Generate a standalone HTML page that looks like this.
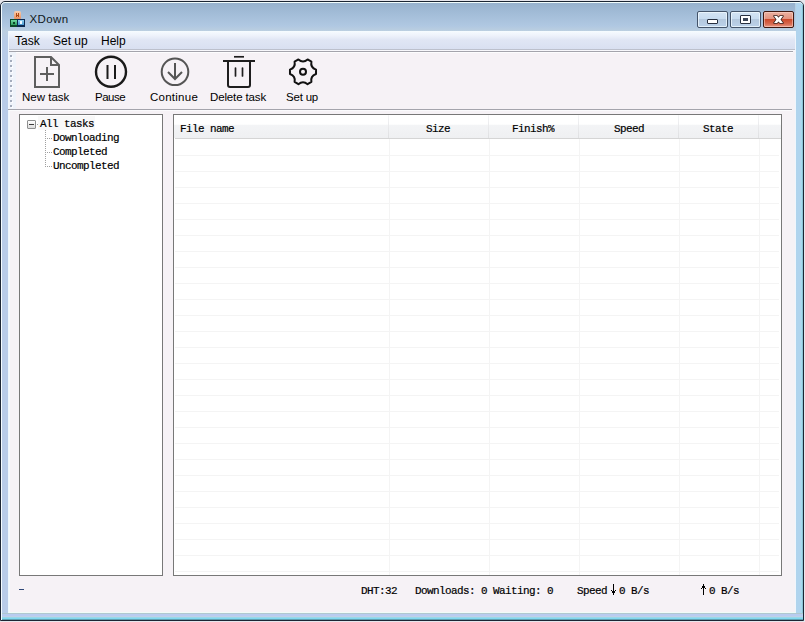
<!DOCTYPE html>
<html><head><meta charset="utf-8">
<style>
*{margin:0;padding:0;box-sizing:border-box}
html,body{width:805px;height:622px;overflow:hidden;background:#e6e6ec;position:relative}
div,span{position:absolute}
.sans{font-family:"Liberation Sans",sans-serif}
.mono{font-family:"Liberation Mono",monospace;-webkit-text-stroke:0.2px #000;font-size:11.5px;letter-spacing:-0.6px;white-space:pre;transform:scaleX(.952);transform-origin:0 0;color:#000;line-height:14px}
#frame{left:0;top:1px;width:804px;height:620px;border:1px solid #1c2634;border-radius:5px 5px 0 0;
  background:linear-gradient(to bottom,#96b1cd 0px,#a3bdd8 12px,#b0c8e2 24px,#bccfe0 29px,#b8cce8 40px,#b8cce8 100%);overflow:hidden}
#hl{left:0;top:0;width:802px;height:618px;border-left:1px solid #f4fcff;border-top:1px solid #f0fcfc;border-radius:4px 4px 0 0}
#client{left:8px;top:31px;width:788px;height:582px;background:#f6f2f6;border-left:1px solid #eef6fc;box-shadow:inset 1px 0 0 #f4f8fc;border-right:1px solid #f0f6fc;border-bottom:1px solid #f0fcf8;overflow:hidden}
#bottomcyan{left:1px;top:611px;width:802px;height:7px;background:linear-gradient(to bottom,#b0c8d0 0,#b0c8d0 1px,#b8ccf0 1px,#b8ccf0 3px,#c0d0e8 3px,#c0d0e8 4px,#98d8e8 4px,#98d8e8 5px,#80d8f0 5px,#80d8f0 6px,#60a0b0 6px)}
#rightcyan{left:794px;top:0;width:8px;height:618px;background:linear-gradient(to right,#b8ccdc,#b0d4ee 20%,#b0d4ee 70%,#a8dcf0 80%,#80b8c8)}
</style></head><body>
<div id="frame">
  <div id="rightcyan"></div>
  <div id="bottomcyan"></div>
  <div id="hl"></div>
</div>
<!-- app icon -->
<div style="left:14px;top:11px;width:7px;height:8px;background:linear-gradient(#f8d0b0,#e89060);border-radius:2px 2px 1px 1px"></div>
<div style="left:16px;top:13px;width:1px;height:4px;background:#b04810"></div><div style="left:18px;top:13px;width:1px;height:4px;background:#b04810"></div><div style="left:16px;top:15px;width:3px;height:1px;background:#b04810"></div>
<div style="left:10px;top:19px;width:8px;height:8px;background:linear-gradient(#70d8a0,#30a060);border:1px solid #0c4828;border-bottom-width:2px"></div>
<div style="left:13px;top:22px;width:2px;height:2px;background:#0c4828"></div>
<div style="left:17px;top:19px;width:8px;height:8px;background:linear-gradient(#90d0f0,#4898d0);border:1px solid #0c2850;border-bottom-width:2px"></div>
<div style="left:20px;top:21px;width:2px;height:3px;background:#f0f8ff"></div>
<div class="sans" style="left:29.6px;top:12.4px;font-size:11.5px;letter-spacing:0.35px;color:#101820;line-height:15px">XDown</div>

<!-- window buttons -->
<div style="left:697px;top:11px;width:31px;height:17px;border:1px solid #44546a;border-radius:2px;box-shadow:inset 0 0 0 1px rgba(240,250,255,.75);background:linear-gradient(#d4e4f4 0,#c8dcf0 45%,#b4c8de 50%,#bcd2ea 100%)"></div>
<div style="left:707px;top:19px;width:11px;height:5px;border:1px solid #283040;border-radius:1px;background:#fff"></div>
<div style="left:730px;top:11px;width:31px;height:17px;border:1px solid #44546a;border-radius:2px;box-shadow:inset 0 0 0 1px rgba(240,250,255,.75);background:linear-gradient(#d4e4f4 0,#c8dcf0 45%,#b4c8de 50%,#bcd2ea 100%)"></div>
<div style="left:740px;top:15px;width:11px;height:9px;border:1px solid #283040;border-radius:1px;background:#fff"></div>
<div style="left:743px;top:18px;width:5px;height:3px;background:#3c4658"></div>
<div style="left:763px;top:11px;width:31px;height:17px;border:1px solid #401810;border-radius:2px;box-shadow:inset 0 0 0 1px rgba(255,220,210,.5);background:linear-gradient(#eab0a0 0,#e49480 45%,#cc4a2c 50%,#d86a50 80%,#e89a88 100%)"></div>
<svg style="position:absolute;left:770px;top:12px" width="17" height="14" viewBox="0 0 17 14">
  <path d="M4.0 4.0 L7.0 4.0 L8.5 5.8 L10.0 4.0 L13.0 4.0 L10.5 7.6 L13.0 11.0 L10.0 11.0 L8.5 9.4 L7.0 11.0 L4.0 11.0 L6.5 7.6 Z" fill="#fff" stroke="#3a2420" stroke-width="1.6" stroke-linejoin="round" paint-order="stroke"/>
</svg>

<div id="client">
  <!-- menubar -->
  <div style="left:0;top:0;width:788px;height:18px;background:linear-gradient(#f6fcff 0,#eef2fb 25%,#e0e6f4 50%,#d9e0f1 100%)"></div>
  <div style="left:0;top:18px;width:788px;height:1px;background:#bcc0cc"></div>
  <div style="left:0;top:19px;width:788px;height:1px;background:#f8f8fc"></div>
  <div style="left:0;top:20px;width:784px;height:1px;background:#a4a4ac"></div>
  <div style="left:0;top:21px;width:784px;height:1px;background:#fdfdfe"></div>
  <div class="sans" style="left:6px;top:3px;font-size:12px;line-height:15px;color:#000">Task</div>
  <div class="sans" style="left:44px;top:3px;font-size:12px;line-height:15px;color:#000">Set up</div>
  <div class="sans" style="left:92px;top:3px;font-size:12px;line-height:15px;color:#000">Help</div>

  <!-- toolbar bottom line -->
  <div style="left:-1px;top:78px;width:784px;height:1px;background:#a4a4ac"></div>
  <div style="left:-1px;top:79px;width:784px;height:1px;background:#fbfbfd"></div>
  <div style="left:0;top:21px;width:7px;height:57px;background:#eff3fa"></div>
</div>

<!-- gripper -->



<div style="left:10px;top:55px;width:2px;height:2px;background:#a4acbc;box-shadow:1px 1px 0 #fcfcff"></div><div style="left:10px;top:60px;width:2px;height:2px;background:#a4acbc;box-shadow:1px 1px 0 #fcfcff"></div><div style="left:10px;top:65px;width:2px;height:2px;background:#a4acbc;box-shadow:1px 1px 0 #fcfcff"></div><div style="left:10px;top:70px;width:2px;height:2px;background:#a4acbc;box-shadow:1px 1px 0 #fcfcff"></div><div style="left:10px;top:75px;width:2px;height:2px;background:#a4acbc;box-shadow:1px 1px 0 #fcfcff"></div><div style="left:10px;top:80px;width:2px;height:2px;background:#a4acbc;box-shadow:1px 1px 0 #fcfcff"></div><div style="left:10px;top:85px;width:2px;height:2px;background:#a4acbc;box-shadow:1px 1px 0 #fcfcff"></div><div style="left:10px;top:90px;width:2px;height:2px;background:#a4acbc;box-shadow:1px 1px 0 #fcfcff"></div><div style="left:10px;top:95px;width:2px;height:2px;background:#a4acbc;box-shadow:1px 1px 0 #fcfcff"></div><div style="left:10px;top:100px;width:2px;height:2px;background:#a4acbc;box-shadow:1px 1px 0 #fcfcff"></div><div style="left:10px;top:105px;width:2px;height:2px;background:#a4acbc;box-shadow:1px 1px 0 #fcfcff"></div>
<div style="left:8px;top:109px;width:1px;height:1px;background:#a4a4ac"></div>
<!-- toolbar icons -->
<svg style="position:absolute;left:0;top:0" width="805" height="110">
  <g fill="none" stroke="#5e5e5e" stroke-width="2">
    <path d="M35 57 H51 L59 65 V87 H35 Z"/>
    <path d="M51 57 V65 H59"/>
    <path d="M40 74 H54 M47 67 V81"/>
  </g>
  <circle cx="111" cy="71.8" r="15" fill="none" stroke="#1a1a1a" stroke-width="2.4"/>
  <path d="M107.5 65 V79 M115 65 V79" stroke="#1a1a1a" stroke-width="2"/>
  <circle cx="175" cy="71.8" r="13.3" fill="none" stroke="#555" stroke-width="2"/>
  <path d="M175 63 V79 M168 72 L175 79 L182 72" fill="none" stroke="#555" stroke-width="2"/>
  <g stroke="#1e1e1e" stroke-width="2" fill="none">
    <path d="M234 56.8 H244" stroke-width="1.7"/>
    <path d="M223 61 H255"/>
    <path d="M228 61 V85 Q228 87 230 87 H248 Q250 87 250 85 V61"/>
    <path d="M235.5 68 V76 M242.5 68 V76" stroke-width="1.7" stroke-linecap="round"/>
  </g>
  <path d="M316.02 69.60 L316.02 74.00 Q310.27 76.00 311.41 81.97 L307.60 84.17 Q303.00 80.20 298.40 84.17 L294.59 81.97 Q295.73 76.00 289.98 74.00 L289.98 69.60 Q295.73 67.60 294.59 61.63 L298.40 59.43 Q303.00 63.40 307.60 59.43 L311.41 61.63 Q310.27 67.60 316.02 69.60 Z" fill="none" stroke="#111" stroke-width="2" stroke-linejoin="round"/>
  <circle cx="303" cy="71.8" r="3" fill="none" stroke="#111" stroke-width="2"/>
</svg>

<div class="sans" style="left:22px;top:90px;font-size:11.5px;line-height:14px;color:#000">New task</div>
<div class="sans" style="left:95px;top:90px;font-size:11.5px;letter-spacing:-0.5px;line-height:14px;color:#000">Pause</div>
<div class="sans" style="left:150px;top:90px;font-size:11.5px;letter-spacing:0.25px;line-height:14px;color:#000">Continue</div>
<div class="sans" style="left:210px;top:90px;font-size:11.5px;letter-spacing:-0.14px;line-height:14px;color:#000">Delete task</div>
<div class="sans" style="left:286px;top:90px;font-size:11.5px;letter-spacing:-0.2px;line-height:14px;color:#000">Set up</div>

<!-- tree -->
<div style="left:19px;top:114px;width:144px;height:462px;border:1px solid #787878;background:#fff"></div>
<div style="left:38px;top:116px;width:57px;height:14px;background:#f8f8f8"></div>
<div class="mono" style="left:40px;top:117px">All tasks</div>
<div class="mono" style="left:53px;top:131px">Downloading</div>
<div class="mono" style="left:53px;top:145px">Completed</div>
<div class="mono" style="left:53px;top:159px">Uncompleted</div>

<!-- list -->
<div style="left:173px;top:114px;width:609px;height:462px;border:1px solid #787878;background:#fff"></div>
<div style="left:174px;top:115px;width:607px;height:23px;background:linear-gradient(#ffffff 0,#ffffff 40%,#f3f4f6 45%,#eff0f2 100%)"></div>
<div style="left:175px;top:138px;width:606px;height:1px;background:#d5d5d5"></div>

<!-- tree decorations -->
<div style="left:27px;top:120px;width:9px;height:9px;border:1px solid #8e8f8f;border-radius:1px;background:linear-gradient(#ffffff,#dcdcdc)"></div>
<div style="left:29px;top:124px;width:5px;height:1px;background:#3c3c3c"></div>
<div style="left:37px;top:124px;width:1px;height:1px;background:#a0a0a0"></div>
<div style="left:45px;top:130px;width:1px;height:37px;background:repeating-linear-gradient(to bottom,#a0a0a0 0,#a0a0a0 1px,transparent 1px,transparent 2px)"></div>
<div style="left:47px;top:138px;width:6px;height:1px;background:repeating-linear-gradient(to right,#a0a0a0 0,#a0a0a0 1px,transparent 1px,transparent 2px)"></div>
<div style="left:47px;top:152px;width:6px;height:1px;background:repeating-linear-gradient(to right,#a0a0a0 0,#a0a0a0 1px,transparent 1px,transparent 2px)"></div>
<div style="left:47px;top:166px;width:6px;height:1px;background:repeating-linear-gradient(to right,#a0a0a0 0,#a0a0a0 1px,transparent 1px,transparent 2px)"></div>
<!-- list grid -->
<div style="left:175px;top:140px;width:604px;height:435px;background:linear-gradient(to bottom,transparent 15px,#f4f4f4 15px);background-size:604px 16px"></div>
<div style="left:389px;top:139px;width:1px;height:436px;background:#f4f4f4"></div>
<div style="left:489px;top:139px;width:1px;height:436px;background:#f4f4f4"></div>
<div style="left:579px;top:139px;width:1px;height:436px;background:#f4f4f4"></div>
<div style="left:679px;top:139px;width:1px;height:436px;background:#f4f4f4"></div>
<div style="left:759px;top:139px;width:1px;height:436px;background:#f4f4f4"></div>
<!-- header separators -->
<div style="left:388px;top:115px;width:1px;height:23px;background:linear-gradient(#f4f4f6,#dfe0e2)"></div>
<div style="left:488px;top:115px;width:1px;height:23px;background:linear-gradient(#f4f4f6,#dfe0e2)"></div>
<div style="left:578px;top:115px;width:1px;height:23px;background:linear-gradient(#f4f4f6,#dfe0e2)"></div>
<div style="left:678px;top:115px;width:1px;height:23px;background:linear-gradient(#f4f4f6,#dfe0e2)"></div>
<div style="left:758px;top:115px;width:1px;height:23px;background:linear-gradient(#f4f4f6,#dfe0e2)"></div>
<div class="mono" style="left:180px;top:122px">File name</div>
<div class="mono" style="left:426px;top:122px">Size</div>
<div class="mono" style="left:512px;top:122px">Finish%</div>
<div class="mono" style="left:614px;top:122px">Speed</div>
<div class="mono" style="left:703px;top:122px">State</div>

<!-- status -->
<div style="left:19px;top:589px;width:5px;height:1px;background:#304878"></div>
<div class="mono" style="left:361px;top:584px">DHT:32</div>
<div class="mono" style="left:415px;top:584px">Downloads: 0 Waiting: 0</div>
<div class="mono" style="left:577px;top:584px">Speed</div>
<div class="mono" style="left:619px;top:584px">0 B/s</div>
<div class="mono" style="left:709px;top:584px">0 B/s</div>
<div style="left:613px;top:584px;width:1px;height:11px;background:#000"></div><div style="left:612px;top:591px;width:3px;height:2px;background:#000"></div><div style="left:611px;top:590px;width:1px;height:1px;background:#000"></div><div style="left:615px;top:590px;width:1px;height:1px;background:#000"></div><div style="left:703px;top:584px;width:1px;height:11px;background:#000"></div><div style="left:702px;top:586px;width:3px;height:2px;background:#000"></div><div style="left:701px;top:588px;width:1px;height:1px;background:#000"></div><div style="left:705px;top:588px;width:1px;height:1px;background:#000"></div>
</body></html>
